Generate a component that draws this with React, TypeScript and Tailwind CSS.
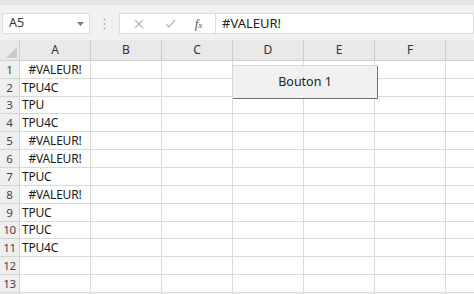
import React from "react";

const rowHeights = [18, 18, 17, 18, 18, 18, 18, 18, 18, 17, 18, 18, 18];
const colsA: { v: string; err?: boolean }[] = [
  { v: "#VALEUR!", err: true },
  { v: "TPU4C" },
  { v: "TPU" },
  { v: "TPU4C" },
  { v: "#VALEUR!", err: true },
  { v: "#VALEUR!", err: true },
  { v: "TPUC" },
  { v: "#VALEUR!", err: true },
  { v: "TPUC" },
  { v: "TPUC" },
  { v: "TPU4C" },
  { v: "" },
  { v: "" },
];
const letters = ["A", "B", "C", "D", "E", "F", ""];

export default function App() {
  return (
    <div className="relative w-[474px] h-[294px] overflow-hidden bg-[#f1f1f1] font-['Noto_Sans',sans-serif] text-[#222]">
      {/* toolbar */}
      <div className="h-[40px] border-t-[5px] border-[#e4e4e4] bg-[#f1f1f1] flex items-start pt-[8px]">
        <div className="ml-[2px] w-[88px] h-[21px] bg-white border border-[#dcdcdc] flex items-center justify-between pl-[6px] pr-[5px]">
          <span className="text-[12.5px] text-[#333] leading-none">A5</span>
          <svg width="7" height="4" viewBox="0 0 7 4">
            <path d="M0 0 L7 0 L3.5 4 Z" fill="#777" />
          </svg>
        </div>
        <div className="w-[29px] h-[21px] flex items-center justify-center">
          <svg width="3" height="12" viewBox="0 0 3 12">
            <circle cx="1.5" cy="1.5" r="0.9" fill="#aaa" />
            <circle cx="1.5" cy="6" r="0.9" fill="#aaa" />
            <circle cx="1.5" cy="10.5" r="0.9" fill="#aaa" />
          </svg>
        </div>
        <div className="w-[97px] h-[21px] bg-white border border-[#dcdcdc] flex items-center">
          <div className="w-[38px] flex justify-center">
            <svg width="10" height="10" viewBox="0 0 10 10">
              <path d="M1 1 L9 9 M9 1 L1 9" stroke="#b8b8b8" strokeWidth="1.2" />
            </svg>
          </div>
          <div className="w-[24px] flex justify-center">
            <svg width="11" height="9" viewBox="0 0 11 9">
              <path d="M1 5 L4 8 L10 1" stroke="#b8b8b8" strokeWidth="1.2" fill="none" />
            </svg>
          </div>
          <div className="w-[33px] flex justify-center">
            <span className="font-['Liberation_Serif',serif] italic text-[13px] text-[#555] leading-none">
              f<span className="text-[9px]">x</span>
            </span>
          </div>
        </div>
        <div className="flex-1 h-[21px] bg-white border border-l-0 border-[#dcdcdc] flex items-center pl-[6px]">
          <span className="text-[13px] text-[#222] leading-none">#VALEUR!</span>
        </div>
      </div>

      {/* column headers */}
      <div className="flex h-[21px] bg-[#e9e9e9] border-b border-[#cfcfcf]">
        <div className="w-[20px] border-r border-[#cfcfcf] flex items-end justify-end pr-[2px] pb-[2px]">
          <svg width="11" height="11" viewBox="0 0 11 11">
            <path d="M11 0 L11 11 L0 11 Z" fill="#c9c9c9" />
          </svg>
        </div>
        {letters.map((l, i) => (
          <div
            key={i}
            className={`${i === 6 ? "flex-1" : "w-[71px] border-r border-[#cfcfcf]"} flex items-center justify-center text-[12px] text-[#333]`}
          >
            {l}
          </div>
        ))}
      </div>

      {/* rows */}
      <div className="flex flex-col">
        {rowHeights.map((h, r) => (
          <div key={r} className="flex" style={{ height: h }}>
            <div className="w-[20px] bg-[#efefef] border-r border-b border-[#d4d4d4] flex items-center justify-center text-[11.5px] text-[#444] tracking-[-0.3px]">
              {r + 1}
            </div>
            {letters.map((_, c) => (
              <div
                key={c}
                className={`${c === 6 ? "flex-1" : "w-[71px] border-r"} bg-white border-b border-[#dadada] flex items-center ${
                  c === 0 && colsA[r].err ? "justify-center" : "pl-[2px]"
                } text-[12px] text-[#1a1a1a] tracking-[-0.2px] overflow-hidden whitespace-nowrap`}
              >
                {c === 0 ? colsA[r].v : ""}
              </div>
            ))}
          </div>
        ))}
      </div>

      {/* button */}
      <div className="absolute left-[232px] top-[65px] w-[145px] h-[33px] bg-[#f2f1f2] border-t border-l border-[#d8d8d8] shadow-[1px_1px_0_#6e6e6e] flex items-center justify-center">
        <span className="text-[12.5px] text-[#222]">Bouton 1</span>
      </div>
    </div>
  );
}
